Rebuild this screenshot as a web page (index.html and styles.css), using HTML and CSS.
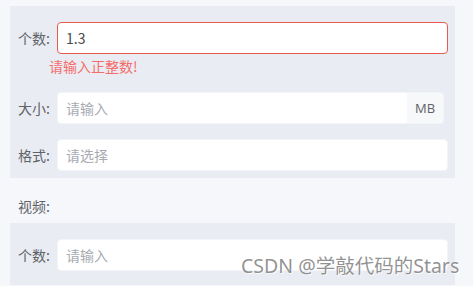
FILE: index.html
```html
<!DOCTYPE html>
<html lang="zh">
<head>
<meta charset="utf-8">
<link rel="stylesheet" href="styles.css">
</head>
<body>
<div class="page">
  <div class="panel">
    <div class="item item-error">
      <div class="row">
        <label class="label">个数:</label>
        <div class="input is-error"><span class="value">1.3</span></div>
      </div>
      <div class="error">请输入正整数!</div>
    </div>
    <div class="item">
      <div class="row">
        <label class="label">大小:</label>
        <div class="input group"><span class="ph">请输入</span><span class="append">MB</span></div>
      </div>
    </div>
    <div class="item last">
      <div class="row">
        <label class="label">格式:</label>
        <div class="input"><span class="ph">请选择</span></div>
      </div>
    </div>
  </div>
  <div class="section-title">视频:</div>
  <div class="panel panel-open">
    <div class="item last">
      <div class="row">
        <label class="label">个数:</label>
        <div class="input"><span class="ph">请输入</span></div>
      </div>
    </div>
  </div>
</div>
<div class="watermark">CSDN @学敲代码的Stars</div>
</body>
</html>
```
FILE: styles.css
```css
html, body {
  margin: 0;
  padding: 0;
  background: #f6f7fa;
  height: 100%;
  overflow: hidden;
}
body {
  font-family: "Noto Sans CJK SC", "Noto Sans", sans-serif;
  font-size: 14px;
  color: #606266;
}
.page {
  width: 445px;
  padding: 6px 0 0 10px;
}
.panel {
  background: #e9ecf2;
  padding: 16px 7px 7px 8px;
}
.panel-open {
  padding-bottom: 14px;
}
.item {
  margin-bottom: 15px;
}
.item.last {
  margin-bottom: 0;
}
.item-error {
  margin-bottom: 16px;
}
.row {
  display: flex;
  align-items: center;
  height: 32px;
}
.label {
  width: 39px;
  flex: none;
  line-height: 32px;
  color: #5f6268;
}
.input {
  flex: 1;
  height: 32px;
  box-sizing: border-box;
  border: 1px solid #f2f4f8;
  border-radius: 4px;
  background: #fff;
  display: flex;
  align-items: center;
  padding-left: 8px;
  line-height: 30px;
  overflow: hidden;
}
.input.is-error {
  border-color: #e8594f;
}
.value {
  color: #474a50;
}
.ph {
  color: #a8abb2;
  flex: 1;
}
.group {
  margin-right: 4px;
  padding-right: 0;
}
.append {
  flex: none;
  width: 36px;
  height: 100%;
  background: #f7f8fa;
  text-align: center;
  color: #606266;
  font-family: "Open Sans", "Noto Sans", sans-serif;
  font-size: 13px;
}
.error {
  color: #f56c6c;
  line-height: 20px;
  margin-top: 2px;
  padding-left: 31px;
}
.section-title {
  padding: 18px 0 7px 8px;
  line-height: 20px;
  color: #5f6268;
}
.watermark {
  position: absolute;
  left: 241px;
  top: 254px;
  font-family: "Noto Sans", "Noto Sans CJK SC", sans-serif;
  font-size: 19.5px;
  line-height: 24px;
  color: rgba(110, 110, 110, 0.75);
  text-shadow: 0 0 1px #fff, 1px 1px 0 rgba(255,255,255,0.8);
  white-space: nowrap;
}
```
